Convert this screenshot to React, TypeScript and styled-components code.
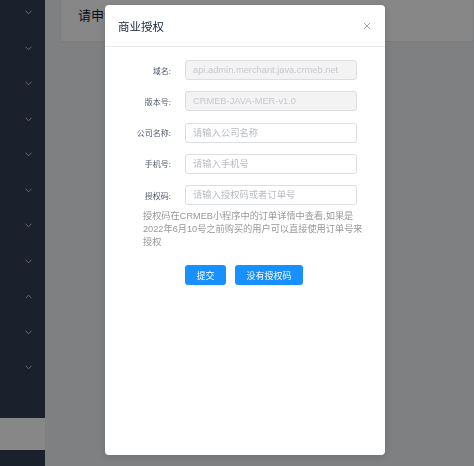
import React from 'react'
import styled, { createGlobalStyle } from 'styled-components'

const GlobalStyle = createGlobalStyle`
  html, body {
    margin: 0;
    padding: 0;
    background: #f0f2f5;
  }
  body {
    font-family: 'Liberation Sans', 'Noto Sans CJK SC', sans-serif;
    overflow: hidden;
  }
  * {
    box-sizing: border-box;
  }
`

const Layout = styled.div`
  display: flex;
  width: 100%;
  height: 100vh;
`

const Sidebar = styled.aside`
  width: 45px;
  flex-shrink: 0;
  display: flex;
  flex-direction: column;
  background: #333e55;
  overflow: hidden;
`

const MenuList = styled.ul`
  list-style: none;
  margin: -5px 0 0;
  padding: 0;
`

const MenuItem = styled.li`
  height: 35.5px;
  display: flex;
  align-items: center;
  justify-content: flex-end;
  padding-right: 13px;
  color: rgba(255, 255, 255, 0.75);
`

const Filler = styled.div<{ $h: number }>`
  height: ${({ $h }) => $h}px;
  flex-shrink: 0;
`

const ActiveStrip = styled.div`
  height: 32px;
  flex-shrink: 0;
  background: #ffffff;
`

const Main = styled.main`
  flex: 1;
  padding-left: 15px;
  background: #f0f2f5;
`

const PageHeader = styled.div`
  height: 42px;
  background: #ffffff;
  border: 1px solid #e8eaec;
  border-top: none;
  padding: 5px 0 0 17px;
  font-size: 13px;
  color: #17233d;
  font-family: 'Noto Sans CJK SC', sans-serif;
`

const Mask = styled.div`
  position: fixed;
  inset: 0;
  background: rgba(0, 0, 0, 0.47);
`

const Modal = styled.div`
  position: fixed;
  left: 105px;
  top: 5px;
  width: 280px;
  height: 450px;
  background: #ffffff;
  border-radius: 4px;
  box-shadow: 0 2px 8px rgba(0, 0, 0, 0.15);
  display: flex;
  flex-direction: column;
`

const ModalHeader = styled.div`
  height: 42px;
  padding: 0 14px 0 13px;
  display: flex;
  align-items: center;
  justify-content: space-between;
  border-bottom: 1px solid #e8eaec;
`

const ModalTitle = styled.div`
  font-family: 'Noto Sans CJK SC', sans-serif;
  font-size: 11.5px;
  color: #17233d;
`

const CloseButton = styled.button`
  border: none;
  background: none;
  padding: 0;
  display: flex;
  color: #999999;
`

const ModalBody = styled.div`
  padding-top: 13px;
`

const Form = styled.div`
  display: grid;
  grid-template-columns: 80px 172px;
  row-gap: 11.3px;
`

const Label = styled.label`
  height: 20px;
  display: flex;
  align-items: center;
  justify-content: flex-end;
  padding-right: 14px;
  font-family: 'Noto Sans CJK SC', sans-serif;
  font-size: 8px;
  color: #515a6e;
`

const Input = styled.input<{ disabled?: boolean }>`
  height: 20px;
  width: 172px;
  padding: 0 7px;
  border: 1px solid #dcdee2;
  border-radius: 3px;
  font-family: 'Liberation Sans', 'Noto Sans CJK SC', sans-serif;
  font-size: 9.3px;
  color: ${({ disabled }) => (disabled ? '#c5c8ce' : '#515a6e')};
  background: ${({ disabled }) => (disabled ? '#f3f3f3' : '#ffffff')};
  outline: none;
  &::placeholder {
    color: #b8bbc2;
  }
`

const HelpText = styled.p`
  margin: 5px 0 0 38px;
  width: 221px;
  font-size: 9.2px;
  line-height: 13px;
  color: #999999;
`

const ButtonRow = styled.div`
  margin-top: 16px;
  padding-left: 80px;
  display: flex;
  gap: 9px;
`

const Button = styled.button`
  height: 20px;
  padding: 0 11.5px;
  border: none;
  border-radius: 3px;
  background: #1890ff;
  color: #ffffff;
  font-family: 'Noto Sans CJK SC', sans-serif;
  font-size: 9px;
`

const Chevron = ({ up }: { up?: boolean }) => (
  <svg width="7" height="5" viewBox="0 0 7 5" fill="none">
    <path
      d={up ? 'M0.8 4 L3.5 1.2 L6.2 4' : 'M0.8 1 L3.5 3.8 L6.2 1'}
      stroke="currentColor"
      strokeWidth="0.9"
      strokeLinecap="round"
      strokeLinejoin="round"
    />
  </svg>
)

const CloseIcon = () => (
  <svg width="8" height="8" viewBox="0 0 8 8">
    <path d="M0.8 0.8 L7.2 7.2 M7.2 0.8 L0.8 7.2" stroke="currentColor" strokeWidth="0.9" />
  </svg>
)

const menu = [false, false, false, false, false, false, false, false, true, false, false]

const fields = [
  { label: '域名:', value: 'api.admin.merchant.java.crmeb.net', disabled: true },
  { label: '版本号:', value: 'CRMEB-JAVA-MER-v1.0', disabled: true },
  { label: '公司名称:', placeholder: '请输入公司名称' },
  { label: '手机号:', placeholder: '请输入手机号' },
  { label: '授权码:', placeholder: '请输入授权码或者订单号' },
]

export default function App() {
  return (
    <>
      <GlobalStyle />
      <Layout>
        <Sidebar>
          <MenuList>
            {menu.map((up, i) => (
              <MenuItem key={i}>
                <Chevron up={up} />
              </MenuItem>
            ))}
          </MenuList>
          <Filler $h={32.5} />
          <ActiveStrip />
        </Sidebar>
        <Main>
          <PageHeader>请申请</PageHeader>
        </Main>
      </Layout>
      <Mask />
      <Modal>
        <ModalHeader>
          <ModalTitle>商业授权</ModalTitle>
          <CloseButton>
            <CloseIcon />
          </CloseButton>
        </ModalHeader>
        <ModalBody>
          <Form>
            {fields.map((f) => (
              <React.Fragment key={f.label}>
                <Label>{f.label}</Label>
                <Input
                  disabled={f.disabled}
                  defaultValue={f.value}
                  placeholder={f.placeholder}
                />
              </React.Fragment>
            ))}
          </Form>
          <HelpText>
            授权码在CRMEB小程序中的订单详情中查看,如果是2022年6月10号之前购买的用户可以直接使用订单号来授权
          </HelpText>
          <ButtonRow>
            <Button>提交</Button>
            <Button>没有授权码</Button>
          </ButtonRow>
        </ModalBody>
      </Modal>
    </>
  )
}
